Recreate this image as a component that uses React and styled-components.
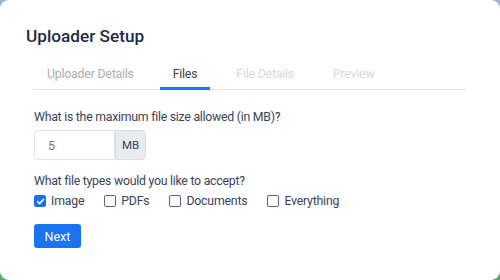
import React, { useState } from "react";
import styled, { createGlobalStyle } from "styled-components";

const Global = createGlobalStyle`
  html, body { margin: 0; padding: 0; }
  body {
    width: 500px; height: 280px; overflow: hidden;
    background: linear-gradient(180deg, #9fb4dc 0%, #d9e3ec 60%, #5aa76a 100%);
    font-family: Roboto, "Noto Sans", sans-serif;
  }
`;

const Card = styled.div`
  box-sizing: border-box;
  width: 500px; height: 280px;
  background: #fff;
  border-radius: 9px;
  padding: 26px 34px 0 34px;
`;

const Title = styled.h1`
  margin: 0 0 0 -8px;
  font-size: 17.2px;
  font-weight: 500;
  color: #1f2a44;
  line-height: 20px;
`;

const Tabs = styled.div`
  display: flex;
  gap: 13px;
  margin-top: 12px;
  border-bottom: 1px solid #e3e5e9;
`;

const Tab = styled.div`
  padding: 2px 13px 0;
  height: 27px;
  display: flex;
  align-items: center;
  font-size: 12.3px;
  letter-spacing: -0.2px;
  color: ${p => p.$state === "active" ? "#3c4250" : p.$state === "done" ? "#a9adb5" : "#d6d8dc"};
  border-bottom: 3px solid ${p => p.$state === "active" ? "#2f6fe8" : "transparent"};
  margin-bottom: -1px;
`;

const Label = styled.div`
  font-size: 12.3px;
  letter-spacing: -0.25px;
  color: #3a4256;
  margin-top: ${p => p.$mt || 0}px;
  line-height: 16px;
`;

const InputGroup = styled.div`
  display: flex;
  margin-top: 5px;
  height: 30px;
`;

const Input = styled.input`
  box-sizing: border-box;
  width: 81px;
  height: 30px;
  border: 1px solid #dfe2e7;
  border-radius: 4px 0 0 4px;
  padding: 0 13px;
  font-family: inherit;
  font-size: 12.5px;
  color: #6b7280;
  outline: none;
`;

const Addon = styled.div`
  box-sizing: border-box;
  width: 31px;
  height: 30px;
  background: #e9ecef;
  border: 1px solid #dadde2;
  border-radius: 0 4px 4px 0;
  display: flex;
  align-items: center;
  justify-content: center;
  font-size: 11.5px;
  color: #3a4256;
`;

const Checks = styled.div`
  display: flex;
  gap: 20px;
  margin-top: 4px;
  height: 16px;
  align-items: center;
`;

const CheckLabel = styled.label`
  display: flex;
  align-items: center;
  gap: 5px;
  font-size: 12.3px;
  letter-spacing: -0.2px;
  color: #3a4256;
`;

const Box = styled.span`
  box-sizing: border-box;
  width: 12px; height: 12px;
  border-radius: 2px;
  border: 1px solid ${p => p.$on ? "#1a6ff0" : "#5b6270"};
  background: ${p => p.$on ? "#1a6ff0" : "#fff"};
  display: inline-flex;
  align-items: center;
  justify-content: center;
`;

const Button = styled.button`
  display: block;
  margin-top: 15px;
  height: 24px;
  width: 47px;
  border: none;
  border-radius: 3px;
  background: #1a73f0;
  color: #fff;
  font-family: inherit;
  font-size: 12.5px;
  padding: 0;
`;

function Check({ on, children }) {
  return (
    <CheckLabel>
      <Box $on={on}>
        {on && (
          <svg width="9" height="9" viewBox="0 0 10 10">
            <path d="M1.8 5.2 L4 7.4 L8.3 2.6" fill="none" stroke="#fff" strokeWidth="1.8" strokeLinecap="round" strokeLinejoin="round" />
          </svg>
        )}
      </Box>
      {children}
    </CheckLabel>
  );
}

export default function App() {
  const [size, setSize] = useState("5");
  return (
    <>
      <Global />
      <Card>
        <Title>Uploader Setup</Title>
        <Tabs>
          <Tab $state="done">Uploader Details</Tab>
          <Tab $state="active">Files</Tab>
          <Tab $state="todo">File Details</Tab>
          <Tab $state="todo">Preview</Tab>
        </Tabs>
        <Label $mt={19}>What is the maximum file size allowed (in MB)?</Label>
        <InputGroup>
          <Input value={size} onChange={e => setSize(e.target.value)} />
          <Addon>MB</Addon>
        </InputGroup>
        <Label $mt={13}>What file types would you like to accept?</Label>
        <Checks>
          <Check on>Image</Check>
          <Check>PDFs</Check>
          <Check>Documents</Check>
          <Check>Everything</Check>
        </Checks>
        <Button>Next</Button>
      </Card>
    </>
  );
}
